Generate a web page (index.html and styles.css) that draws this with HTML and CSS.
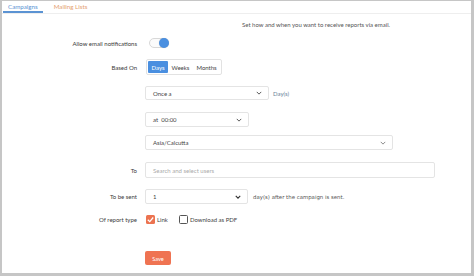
FILE: index.html
```html
<!DOCTYPE html>
<html>
<head>
<meta charset="utf-8">
<link rel="stylesheet" href="styles.css">
</head>
<body>
<div class="frame">
  <div class="tabs">
    <div class="tab active">Campaigns</div>
    <div class="tab other">Mailing Lists</div>
  </div>
  <div class="desc">Set how and when you want to receive reports via email.</div>

  <div class="row r-toggle">
    <div class="label">Allow email notifications</div>
    <div class="field"><span class="toggle"><span class="knob"></span></span></div>
  </div>

  <div class="row r-based">
    <div class="label">Based On</div>
    <div class="field">
      <div class="seg"><span class="seg-item on">Days</span><span class="seg-item">Weeks</span><span class="seg-item">Months</span></div>
    </div>
  </div>

  <div class="row r-once">
    <div class="label"></div>
    <div class="field">
      <div class="select w-once"><span>Once a</span><svg class="chev" viewBox="0 0 8 5"><path d="M1 1 L4 4 L7 1" /></svg></div>
      <span class="after blue-ish">Day(s)</span>
    </div>
  </div>

  <div class="row r-at">
    <div class="label"></div>
    <div class="field">
      <div class="select w-at"><span>at&nbsp; 00:00</span><svg class="chev" viewBox="0 0 8 5"><path d="M1 1 L4 4 L7 1" /></svg></div>
    </div>
  </div>

  <div class="row r-tz">
    <div class="label"></div>
    <div class="field">
      <div class="select w-tz"><span>Asia/Calcutta</span><svg class="chev light" viewBox="0 0 8 5"><path d="M1 1 L4 4 L7 1" /></svg></div>
    </div>
  </div>

  <div class="row r-to">
    <div class="label">To</div>
    <div class="field">
      <div class="input w-to"><span class="ph">Search and select users</span></div>
    </div>
  </div>

  <div class="row r-sent">
    <div class="label">To be sent</div>
    <div class="field">
      <div class="select w-sent"><span>1</span><svg class="chev dark" viewBox="0 0 8 5"><path d="M1 1 L4 4 L7 1" /></svg></div>
      <span class="after alt">day(s) after the campaign is sent.</span>
    </div>
  </div>

  <div class="row r-type">
    <div class="label">Of report type</div>
    <div class="field">
      <span class="cb checked"><svg viewBox="0 0 10 10"><path d="M2 5.2 L4.2 7.4 L8 2.8" /></svg></span><span class="cb-text">Link</span>
      <span class="cb unchecked"></span><span class="cb-text">Download as PDF</span>
    </div>
  </div>

  <div class="row r-save">
    <div class="label"></div>
    <div class="field"><button class="save">Save</button></div>
  </div>
</div>
</body>
</html>
```

FILE: styles.css
```css
* { box-sizing: border-box; }
html, body { margin: 0; padding: 0; }
body {
  width: 474px;
  height: 276px;
  background: #c6c6c6;
  font-family: Lato, "Open Sans", sans-serif;
  font-size: 6px;
  color: #444;
  overflow: hidden;
}
.frame {
  margin: 1px 3px 0 2px;
  height: 272px;
  background: #fff;
}
.tabs {
  display: flex;
  height: 13px;
  border-bottom: 1px solid #eeeeee;
}
.tab {
  padding: 0 5px;
  line-height: 11px;
  font-size: 6.2px;
}
.tab.active {
  color: #5b93d3;
  border-bottom: 2px solid #5b93d3;
  margin-left: 1px;
}
.tab.other {
  color: #e4a06f;
  margin-left: 6px;
}
.desc {
  margin-top: 7px;
  padding-left: 240px;
  height: 8px;
  line-height: 8px;
  color: #555;
}
.row {
  display: grid;
  grid-template-columns: 135px 1fr;
  column-gap: 8px;
  align-items: center;
}
.label {
  text-align: right;
  color: #3a3a3a;
}
.field {
  display: flex;
  align-items: center;
}
.r-toggle { margin-top: 9px; height: 10px; }
.r-based { margin-top: 11px; height: 16px; }
.r-once { margin-top: 11px; height: 14px; }
.r-at { margin-top: 12px; height: 15px; }
.r-tz { margin-top: 8px; height: 15px; }
.r-to { margin-top: 12px; height: 16px; }
.r-sent { margin-top: 11px; height: 15px; }
.r-type { margin-top: 10px; height: 10px; }
.r-save { margin-top: 27px; height: 14px; }

.toggle {
  margin-left: 4px;
  width: 20px;
  height: 10px;
  border: 1px solid #d8d8d8;
  border-radius: 5px;
  background: #fbfbfb;
  position: relative;
  display: block;
}
.knob {
  position: absolute;
  right: -1px;
  top: -1px;
  width: 10px;
  height: 10px;
  border-radius: 50%;
  background: #4a8fe0;
  box-shadow: 0 0 1px rgba(0,0,0,0.2);
}

.seg {
  display: flex;
  height: 16px;
  border: 1px solid #e2e2e2;
  border-radius: 2px;
  padding: 1px;
  margin-left: 1px;
}
.seg-item {
  display: flex;
  align-items: center;
  padding: 0 3.5px;
  color: #444;
}
.seg-item.on {
  background: #4a8fe0;
  color: #fff;
  border-radius: 1px;
}

.select, .input {
  display: flex;
  align-items: center;
  justify-content: space-between;
  border: 1px solid #e4e4e4;
  border-radius: 2px;
  padding: 0 6px 0 7px;
  height: 100%;
  background: #fff;
}
.w-once { width: 124px; height: 14px; }
.w-at { width: 104px; height: 15px; }
.w-tz { width: 248px; height: 15px; }
.w-to { width: 290px; height: 16px; }
.w-sent { width: 103px; height: 15px; }
.chev {
  width: 6px;
  height: 4px;
}
.chev path {
  fill: none;
  stroke: #555;
  stroke-width: 1.3;
}
.chev.light path { stroke: #888; }
.chev.dark path { stroke: #333; stroke-width: 1.5; }
.ph { color: #aaa; }
.after { margin-left: 4px; }
.blue-ish { color: #6b7f99; }
.after.alt {
  margin-left: 5px;
  font-family: "DejaVu Sans", sans-serif;
  font-size: 5.4px;
  color: #555;
}

.cb {
  display: inline-block;
  width: 9px;
  height: 9px;
  border-radius: 1.5px;
}
.cb.checked {
  margin-left: 1px;
  background: #ec7350;
}
.cb.checked svg { width: 9px; height: 9px; display: block; }
.cb.checked path {
  fill: none;
  stroke: #fff;
  stroke-width: 1.4;
}
.cb.unchecked {
  margin-left: 11px;
  border: 1px solid #555;
  background: #fff;
}
.cb-text {
  margin-left: 2px;
  color: #444;
}

.save {
  width: 26px;
  height: 14px;
  border: none;
  border-radius: 2px;
  background: #ef7352;
  color: #fff;
  font-family: Lato, "Open Sans", sans-serif;
  font-size: 5.6px;
  padding: 0;
}
```
